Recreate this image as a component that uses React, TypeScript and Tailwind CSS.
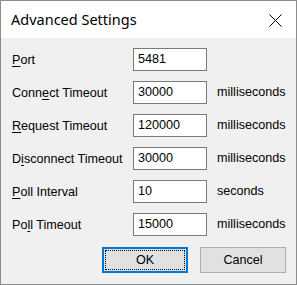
import React from 'react';

const rows: { label: React.ReactNode; value: string; unit?: string }[] = [
  { label: <><u>P</u>ort</>, value: '5481' },
  { label: <>Conn<u>e</u>ct Timeout</>, value: '30000', unit: 'milliseconds' },
  { label: <><u>R</u>equest Timeout</>, value: '120000', unit: 'milliseconds' },
  { label: <>D<u>i</u>sconnect Timeout</>, value: '30000', unit: 'milliseconds' },
  { label: <><u>P</u>oll Interval</>, value: '10', unit: 'seconds' },
  { label: <>Po<u>l</u>l Timeout</>, value: '15000', unit: 'milliseconds' },
];

export default function App() {
  return (
    <div className="w-[297px] h-[285px] border border-[#8c8c8c] bg-[#f0f0f0] flex flex-col text-black">
      {/* Title bar */}
      <div className="h-[37px] bg-white flex items-center justify-between pl-[10px] pr-[14px]">
        <span className="text-[14.5px] leading-none" style={{ fontFamily: '"Noto Sans", "Open Sans", sans-serif' }}>
          Advanced Settings
        </span>
        <svg width="13" height="13" viewBox="0 0 13 13" className="mt-[1px]">
          <path d="M0.5 0.5 L12.5 12.5 M12.5 0.5 L0.5 12.5" stroke="#000" strokeWidth="1" />
        </svg>
      </div>

      {/* Body */}
      <div
        className="flex-1 flex flex-col pl-[11px] pr-[10px] pt-[10px] text-[12.6px]"
        style={{ fontFamily: '"Liberation Sans", Arial, sans-serif' }}
      >
        <div className="grid grid-cols-[121px_74px_1fr] gap-y-[10px] items-center">
          {rows.map((r, i) => (
            <React.Fragment key={i}>
              <div className="leading-none pt-[1px] [&_u]:underline-offset-2">{r.label}</div>
              <div className="h-[23px] bg-white border border-[#7a7a7a] flex items-center pl-[4px]">{r.value}</div>
              <div className="pl-[10px]">{r.unit}</div>
            </React.Fragment>
          ))}
        </div>

        <div className="flex justify-end gap-[12px] mt-[11px]">
          <button className="relative w-[86px] h-[26px] bg-[#e1e1e1] border-2 border-[#0078d7] flex items-center justify-center">
            <span className="absolute inset-[1px] border border-dotted border-black" />
            OK
          </button>
          <button className="w-[86px] h-[26px] bg-[#e1e1e1] border border-[#adadad] flex items-center justify-center">
            Cancel
          </button>
        </div>
      </div>
    </div>
  );
}
